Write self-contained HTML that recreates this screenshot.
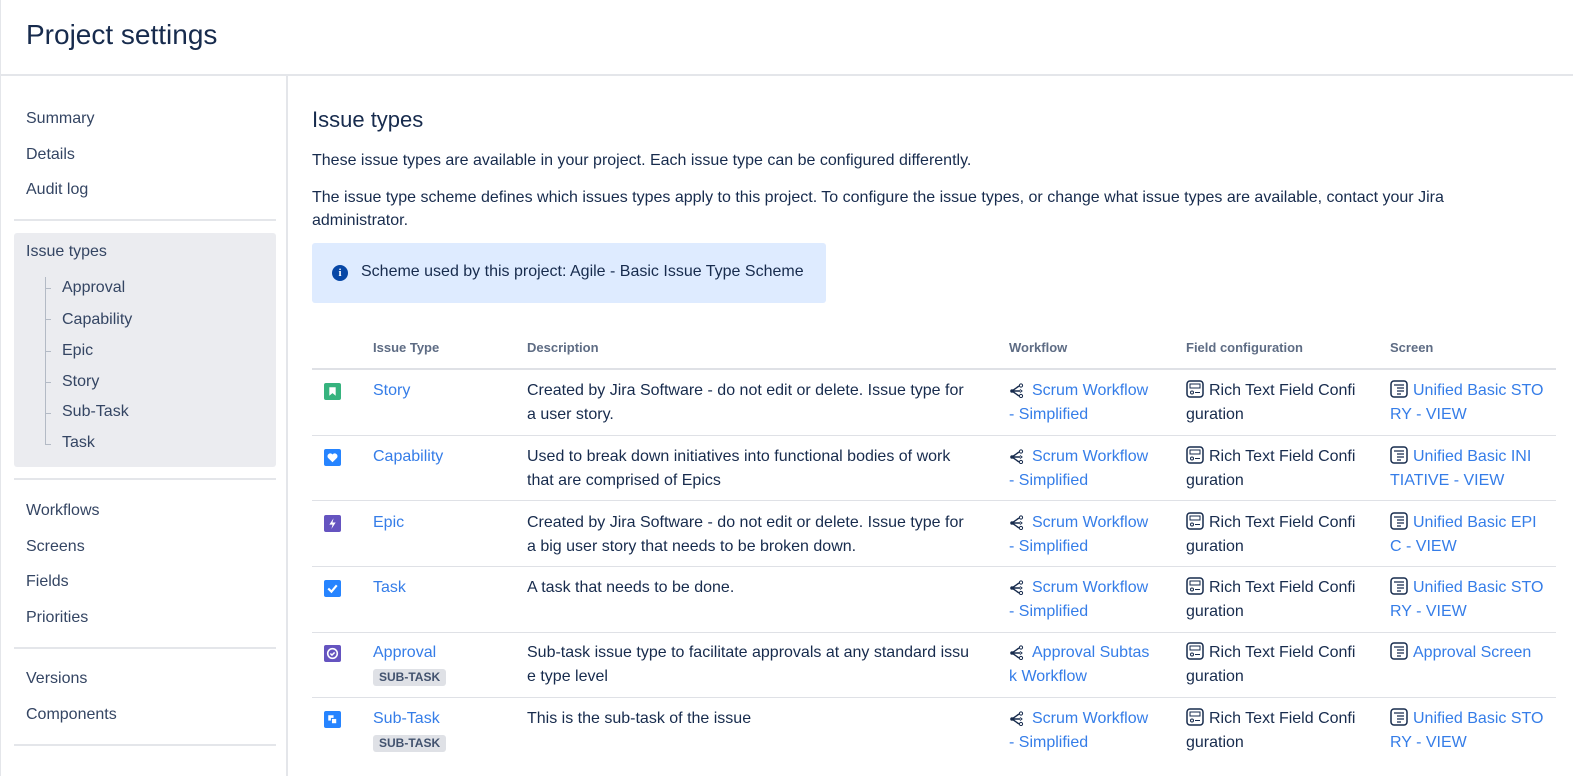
<!DOCTYPE html>
<html><head><meta charset="utf-8"><style>
*{box-sizing:border-box;margin:0;padding:0}
body{width:1573px;height:763px;overflow:hidden;background:#fff;font-family:"Liberation Sans",Arial,sans-serif;color:#172b4d;font-size:16px;position:relative}
.hdr{position:absolute;left:0;top:0;width:1573px;height:76px;border-bottom:2px solid #e4e6ea;border-left:1px solid #e4e6ea}
.hdr h1{position:absolute;left:25px;top:19px;font-size:28px;font-weight:400;color:#172b4d}
.side{position:absolute;left:0;top:76px;width:288px;height:700px;border-right:2px solid #e4e6ea;border-left:1px solid #e4e6ea}
.it{position:absolute;left:25px;font-size:16px;color:#344563;line-height:20px}
.div{position:absolute;left:13px;width:262px;height:2px;background:#e4e6ea}
.box{position:absolute;left:13px;top:157px;width:262px;height:234px;background:#ebecf0;border-radius:3px}
.tl{position:absolute;left:44px;top:201px;width:1px;height:168px;background:#b3bac5}
.tk{position:absolute;left:44px;width:6px;height:1px;background:#b3bac5}
.sub{position:absolute;left:61px;font-size:16px;color:#344563;line-height:20px}
h2{position:absolute;left:312px;top:107px;font-size:22px;font-weight:400;white-space:nowrap}
p{position:absolute;left:312px;font-size:16px;line-height:23px;white-space:nowrap}
.info{position:absolute;left:312px;top:243px;width:514px;height:60px;background:#deebff;border-radius:3px}
.info span{position:absolute;left:49px;top:20px;font-size:16px;white-space:nowrap}
.info i{position:absolute;left:20px;top:22px;width:16px;height:16px;border-radius:50%;background:#0747a6;color:#fff;font-style:normal;font-weight:bold;font-size:11px;text-align:center;line-height:16px;font-family:"Liberation Serif",serif}
.th{position:absolute;top:340px;font-size:13px;font-weight:bold;color:#5e6c84}
.hl{position:absolute;left:312px;top:368px;width:1244px;height:2px;background:#dfe1e6}
.rl{position:absolute;left:312px;width:1244px;height:1px;background:#dfe1e6}
.c{position:absolute;font-size:16px;line-height:24px;white-space:nowrap}
.a{color:#357de8}
.ic{position:absolute;left:324px;width:17px;height:17px;border-radius:2px}
.tag{display:inline-block;background:#dfe1e6;color:#42526e;font-size:12px;font-weight:bold;line-height:17px;padding:0 6px;border-radius:3px;margin-top:1px}
svg{vertical-align:-3px;margin-right:5px}
</style></head><body>
<div class="hdr"><h1>Project settings</h1></div>
<div class="side">
<div class="it" style="top:33px">Summary</div>
<div class="it" style="top:69px">Details</div>
<div class="it" style="top:104px">Audit log</div>
<div class="div" style="top:143px"></div>
<div class="box"></div>
<div class="it" style="top:166px">Issue types</div>
<div class="tl"></div>
<div class="tk" style="top:212px"></div><div class="tk" style="top:243px"></div><div class="tk" style="top:275px"></div><div class="tk" style="top:306px"></div><div class="tk" style="top:337px"></div><div class="tk" style="top:368px"></div>
<div class="sub" style="top:202px">Approval</div>
<div class="sub" style="top:234px">Capability</div>
<div class="sub" style="top:265px">Epic</div>
<div class="sub" style="top:296px">Story</div>
<div class="sub" style="top:326px">Sub-Task</div>
<div class="sub" style="top:357px">Task</div>
<div class="div" style="top:402px"></div>
<div class="it" style="top:425px">Workflows</div>
<div class="it" style="top:461px">Screens</div>
<div class="it" style="top:496px">Fields</div>
<div class="it" style="top:532px">Priorities</div>
<div class="div" style="top:571px"></div>
<div class="it" style="top:593px">Versions</div>
<div class="it" style="top:629px">Components</div>
<div class="div" style="top:668px"></div>
</div>
<h2>Issue types</h2>
<p style="top:149px">These issue types are available in your project. Each issue type can be configured differently.</p>
<p style="top:186px">The issue type scheme defines which issues types apply to this project. To configure the issue types, or change what issue types are available, contact your Jira</p>
<p style="top:209px">administrator.</p>
<div class="info"><i>i</i><span>Scheme used by this project: Agile - Basic Issue Type Scheme</span></div>
<div class="th" style="left:373px">Issue Type</div>
<div class="th" style="left:527px">Description</div>
<div class="th" style="left:1009px">Workflow</div>
<div class="th" style="left:1186px">Field configuration</div>
<div class="th" style="left:1390px">Screen</div>
<div class="hl"></div>
<div class="rl" style="top:435px"></div><div class="rl" style="top:500px"></div><div class="rl" style="top:566px"></div><div class="rl" style="top:632px"></div><div class="rl" style="top:697px"></div>

<svg class="ic" style="top:383px;background:#36b37e" viewBox="0 0 16 16"><path d="M5 4h6v8l-3-2.5L5 12z" fill="#fff"/></svg>
<svg class="ic" style="top:449px;background:#2684ff" viewBox="0 0 16 16"><path d="M8 12.5L3.8 8.3A2.3 2.3 0 0 1 8 5.2a2.3 2.3 0 0 1 4.2 3.1z" fill="#fff"/></svg>
<svg class="ic" style="top:515px;background:#6554c0" viewBox="0 0 16 16"><path d="M9 3L5 9h3l-1 4 4-6H8z" fill="#fff"/></svg>
<svg class="ic" style="top:580px;background:#2684ff" viewBox="0 0 16 16"><path d="M4 8l3 3 5-6" stroke="#fff" stroke-width="2" fill="none"/></svg>
<svg class="ic" style="top:645px;background:#6554c0" viewBox="0 0 16 16"><circle cx="8" cy="8" r="4.5" stroke="#fff" stroke-width="1.5" fill="none"/><path d="M6 8l1.5 1.5L10 7" stroke="#fff" stroke-width="1.4" fill="none"/></svg>
<svg class="ic" style="top:711px;background:#2684ff" viewBox="0 0 16 16"><rect x="4" y="4" width="5" height="5" fill="#fff"/><rect x="7" y="7" width="5" height="5" fill="#fff" stroke="#2684ff"/></svg>

<div class="c a" style="left:373px;top:379px">Story</div>
<div class="c a" style="left:373px;top:445px">Capability</div>
<div class="c a" style="left:373px;top:511px">Epic</div>
<div class="c a" style="left:373px;top:576px">Task</div>
<div class="c" style="left:373px;top:641px"><span class="a">Approval</span><br><span class="tag">SUB-TASK</span></div>
<div class="c" style="left:373px;top:707px"><span class="a">Sub-Task</span><br><span class="tag">SUB-TASK</span></div>

<div class="c" style="left:527px;top:379px">Created by Jira Software - do not edit or delete. Issue type for<br>a user story.</div>
<div class="c" style="left:527px;top:445px">Used to break down initiatives into functional bodies of work<br>that are comprised of Epics</div>
<div class="c" style="left:527px;top:511px">Created by Jira Software - do not edit or delete. Issue type for<br>a big user story that needs to be broken down.</div>
<div class="c" style="left:527px;top:576px">A task that needs to be done.</div>
<div class="c" style="left:527px;top:641px">Sub-task issue type to facilitate approvals at any standard issu<br>e type level</div>
<div class="c" style="left:527px;top:707px">This is the sub-task of the issue</div>

<div id="rows"></div>
<script>
var tops=[379,445,511,576,641,707];
var wf=["Scrum Workflow<br>- Simplified","Scrum Workflow<br>- Simplified","Scrum Workflow<br>- Simplified","Scrum Workflow<br>- Simplified","Approval Subtas<br>k Workflow","Scrum Workflow<br>- Simplified"];
var sc=["Unified Basic STO<br>RY - VIEW","Unified Basic INI<br>TIATIVE - VIEW","Unified Basic EPI<br>C - VIEW","Unified Basic STO<br>RY - VIEW","Approval Screen","Unified Basic STO<br>RY - VIEW"];
var w='<svg width="18" height="16" viewBox="0 0 18 16"><circle cx="3" cy="9" r="1.8" fill="#172b4d"/><path d="M3 9L10 4M3 9h8M3 9l7 5" stroke="#172b4d" stroke-width="1.4" fill="none"/><circle cx="12" cy="3.5" r="1.6" stroke="#172b4d" fill="none"/><circle cx="12" cy="14" r="1.6" stroke="#172b4d" fill="none"/><path d="M11 7.5l2 1.5-2 1.5" stroke="#172b4d" fill="none"/></svg>';
var f='<svg width="18" height="18" viewBox="0 0 18 18"><rect x="1" y="1" width="16" height="16" rx="3" stroke="#172b4d" stroke-width="1.5" fill="none"/><rect x="4" y="4" width="10" height="4" stroke="#172b4d" fill="none"/><circle cx="6" cy="12.5" r="1.5" stroke="#172b4d" fill="none"/><path d="M9 12.5h5" stroke="#172b4d"/></svg>';
var s='<svg width="18" height="18" viewBox="0 0 18 18"><rect x="1" y="1" width="16" height="16" rx="3" stroke="#172b4d" stroke-width="1.5" fill="none"/><path d="M4 5h10M7 8h7M7 11h7M7 14h4" stroke="#172b4d" stroke-width="1.3"/></svg>';
var h='';
for(var i=0;i<6;i++){
h+='<div class="c" style="left:1009px;top:'+tops[i]+'px">'+w+'<span class="a">'+wf[i]+'</span></div>';
h+='<div class="c" style="left:1186px;top:'+tops[i]+'px">'+f+'Rich Text Field Confi<br>guration</div>';
h+='<div class="c" style="left:1390px;top:'+tops[i]+'px">'+s+'<span class="a">'+sc[i]+'</span></div>';
}
document.getElementById('rows').innerHTML=h;
</script>
</body></html>
